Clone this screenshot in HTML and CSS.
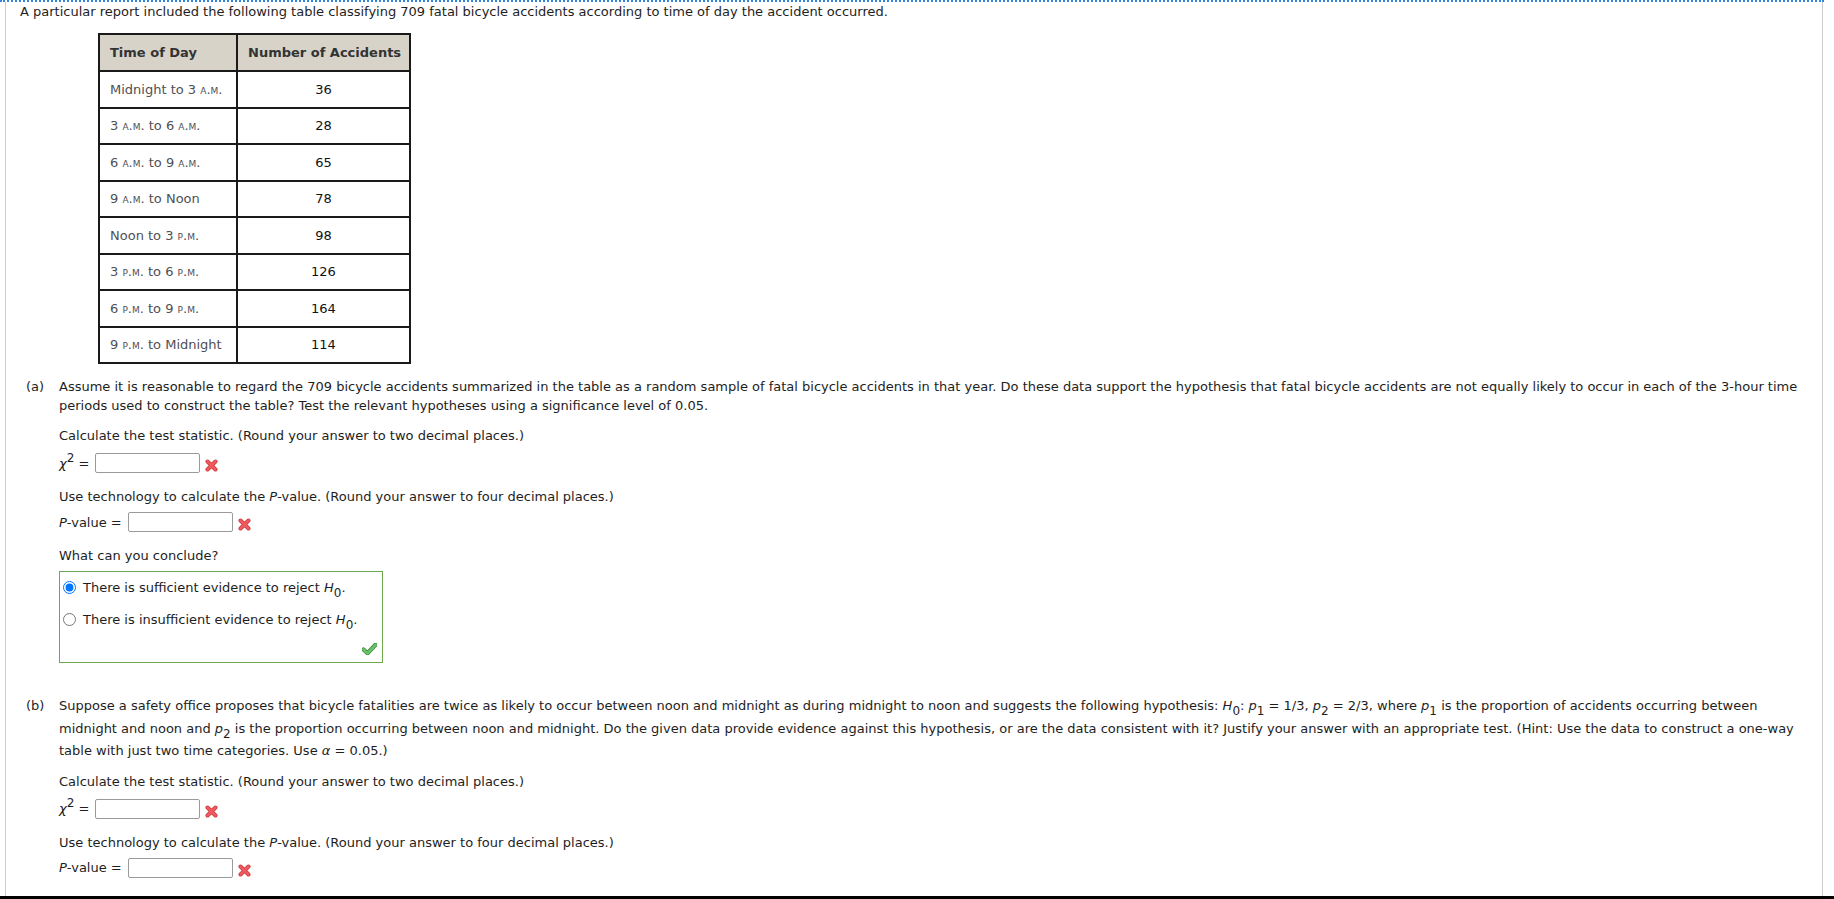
FILE: index.html
```html
<!DOCTYPE html>
<html>
<head>
<meta charset="utf-8">
<title>Bicycle accidents</title>
<link rel="stylesheet" href="styles.css">
</head>
<body>
<div class="frame">
  <div class="panel">
    <p class="intro">A particular report included the following table classifying 709 fatal bicycle accidents according to time of day the accident occurred.</p>

    <table class="data">
      <colgroup><col class="col1"><col class="col2"></colgroup>
      <thead>
        <tr><th>Time of Day</th><th class="c2">Number of Accidents</th></tr>
      </thead>
      <tbody>
        <tr><td class="lbl">Midnight to 3 <span class="sc">a.m.</span></td><td class="num">36</td></tr>
        <tr><td class="lbl">3 <span class="sc">a.m.</span> to 6 <span class="sc">a.m.</span></td><td class="num">28</td></tr>
        <tr><td class="lbl">6 <span class="sc">a.m.</span> to 9 <span class="sc">a.m.</span></td><td class="num">65</td></tr>
        <tr><td class="lbl">9 <span class="sc">a.m.</span> to Noon</td><td class="num">78</td></tr>
        <tr><td class="lbl">Noon to 3 <span class="sc">p.m.</span></td><td class="num">98</td></tr>
        <tr><td class="lbl">3 <span class="sc">p.m.</span> to 6 <span class="sc">p.m.</span></td><td class="num">126</td></tr>
        <tr><td class="lbl">6 <span class="sc">p.m.</span> to 9 <span class="sc">p.m.</span></td><td class="num">164</td></tr>
        <tr><td class="lbl">9 <span class="sc">p.m.</span> to Midnight</td><td class="num">114</td></tr>
      </tbody>
    </table>

    <div class="part part-a">
      <div class="plabel">(a)</div>
      <div class="pbody">
        <p class="q q-a">Assume it is reasonable to regard the 709 bicycle accidents summarized in the table as a random sample of fatal bicycle accidents in that year. Do these data support the hypothesis that fatal bicycle accidents are not equally likely to occur in each of the 3-hour time periods used to construct the table? Test the relevant hypotheses using a significance level of 0.05.</p>
        <p class="instr calc">Calculate the test statistic. (Round your answer to two decimal places.)</p>
        <div class="ans ans-chi">
          <span class="lab"><i class="chi">χ</i><sup>2</sup> =</span>
          <input class="box" type="text">
          <svg class="wrong" width="13" height="13" viewBox="0 0 13 13"><path d="M2.5 2.5 L10.5 10.5 M10.5 2.5 L2.5 10.5" stroke="#c9343a" stroke-width="4" stroke-linecap="round"/><path d="M2.5 2.5 L10.5 10.5 M10.5 2.5 L2.5 10.5" stroke="#ee5a5e" stroke-width="2.6" stroke-linecap="round"/></svg>
        </div>
        <p class="instr tech">Use technology to calculate the <i>P</i>-value. (Round your answer to four decimal places.)</p>
        <div class="ans ans-p">
          <span class="lab"><i>P</i>-value =</span>
          <input class="box" type="text">
          <svg class="wrong" width="13" height="13" viewBox="0 0 13 13"><path d="M2.5 2.5 L10.5 10.5 M10.5 2.5 L2.5 10.5" stroke="#c9343a" stroke-width="4" stroke-linecap="round"/><path d="M2.5 2.5 L10.5 10.5 M10.5 2.5 L2.5 10.5" stroke="#ee5a5e" stroke-width="2.6" stroke-linecap="round"/></svg>
        </div>
        <p class="instr what">What can you conclude?</p>
        <div class="choices">
          <label class="opt"><input type="radio" name="concl" checked><span>There is sufficient evidence to reject <i>H</i><sub>0</sub>.</span></label>
          <label class="opt"><input type="radio" name="concl"><span>There is insufficient evidence to reject <i>H</i><sub>0</sub>.</span></label>
          <div class="check-row">
            <svg class="right" width="15" height="12" viewBox="0 0 15 12"><path d="M1.5 6.5 L5.5 10.3 L13.5 1.8" fill="none" stroke="#3f8f3f" stroke-width="4.2" stroke-linecap="round" stroke-linejoin="round"/><path d="M1.5 6.5 L5.5 10.3 L13.5 1.8" fill="none" stroke="#6cc26c" stroke-width="2.6" stroke-linecap="round" stroke-linejoin="round"/></svg>
          </div>
        </div>
      </div>
    </div>

    <div class="part part-b">
      <div class="plabel">(b)</div>
      <div class="pbody">
        <p class="q q-b">Suppose a safety office proposes that bicycle fatalities are twice as likely to occur between noon and midnight as during midnight to noon and suggests the following hypothesis: <i>H</i><sub>0</sub>: <i>p</i><sub>1</sub> = 1/3, <i>p</i><sub>2</sub> = 2/3, where <i>p</i><sub>1</sub> is the proportion of accidents occurring between midnight and noon and <i>p</i><sub>2</sub> is the proportion occurring between noon and midnight. Do the given data provide evidence against this hypothesis, or are the data consistent with it? Justify your answer with an appropriate test. (Hint: Use the data to construct a one-way table with just two time categories. Use <i>α</i> = 0.05.)</p>
        <p class="instr calc calc-b">Calculate the test statistic. (Round your answer to two decimal places.)</p>
        <div class="ans ans-chi">
          <span class="lab"><i class="chi">χ</i><sup>2</sup> =</span>
          <input class="box" type="text">
          <svg class="wrong" width="13" height="13" viewBox="0 0 13 13"><path d="M2.5 2.5 L10.5 10.5 M10.5 2.5 L2.5 10.5" stroke="#c9343a" stroke-width="4" stroke-linecap="round"/><path d="M2.5 2.5 L10.5 10.5 M10.5 2.5 L2.5 10.5" stroke="#ee5a5e" stroke-width="2.6" stroke-linecap="round"/></svg>
        </div>
        <p class="instr tech">Use technology to calculate the <i>P</i>-value. (Round your answer to four decimal places.)</p>
        <div class="ans ans-p">
          <span class="lab"><i>P</i>-value =</span>
          <input class="box" type="text">
          <svg class="wrong" width="13" height="13" viewBox="0 0 13 13"><path d="M2.5 2.5 L10.5 10.5 M10.5 2.5 L2.5 10.5" stroke="#c9343a" stroke-width="4" stroke-linecap="round"/><path d="M2.5 2.5 L10.5 10.5 M10.5 2.5 L2.5 10.5" stroke="#ee5a5e" stroke-width="2.6" stroke-linecap="round"/></svg>
        </div>
        <p class="instr what">What can you conclude?</p>
      </div>
    </div>
  </div>
</div>
<div class="bottom-bar"></div>
</body>
</html>
```

FILE: styles.css
```css
html, body {
  margin: 0;
  padding: 0;
  height: 899px;
  overflow: hidden;
  background: #fff;
}

body {
  font-family: "DejaVu Sans", Verdana, sans-serif;
  font-size: 13px;
  color: #1e1e1e;
}

p { margin: 0; }

.frame {
  width: 1824px;
  border-top: 2px dotted #2f86df;
}

.panel {
  margin-left: 5px;
  width: 1818px;
  min-height: 1000px;
  box-sizing: border-box;
  border-left: 1px solid #cdcdcd;
  border-right: 1px solid #cdcdcd;
  padding: 0 6px 0 14px;
}

.intro {
  line-height: 19px;
}

/* table */
.data {
  margin: 12px 0 0 78px;
  border-collapse: collapse;
  table-layout: fixed;
  width: 311px;
}

.col1 { width: 138px; }
.col2 { width: 173px; }

.data th,
.data td {
  border: 2px solid #1a1a1a;
  padding: 0 10px;
  white-space: nowrap;
}

.data th {
  background: #d7d3c9;
  color: #333;
  font-weight: bold;
  text-align: left;
  height: 35px;
}

.data th.c2 { text-align: center; }

.data td { height: 34.5px; }

.data td.lbl { color: #4f4f55; }
.data td.num { text-align: center; color: #111; }

.sc { font-variant: small-caps; }

/* parts */
.part {
  display: flex;
  margin-left: 6px;
}

.plabel {
  width: 33px;
  flex: none;
}

.pbody {
  flex: 1;
  min-width: 0;
}

.part-a { margin-top: 13px; }
.part-a .plabel { line-height: 19px; }
.part-b { margin-top: 32px; }
.part-b .plabel { line-height: 22.5px; }

.q-a { line-height: 19px; }
.q-b { line-height: 22.5px; }

.instr { line-height: 19px; }
.calc { margin-top: 11px; }
.calc-b { margin-top: 9px; }
.tech { margin-top: 14px; }
.what { margin-top: 14px; }

sub {
  font-size: 12px;
  vertical-align: baseline;
  position: relative;
  top: 5px;
  line-height: 0;
}

sup {
  font-size: 12px;
  vertical-align: baseline;
  position: relative;
  top: -6px;
  line-height: 0;
}

i { font-style: italic; }

.ans {
  display: flex;
  align-items: center;
  height: 20px;
}

.ans-chi { margin-top: 8px; }
.ans-p { margin-top: 6px; }

.lab { white-space: nowrap; }

.box {
  width: 105px;
  height: 20px;
  box-sizing: border-box;
  border: 1px solid #9a9a9a;
  border-radius: 2px;
  padding: 0 3px;
  margin: 0 0 0 6px;
  font: inherit;
  background: #fff;
}

.wrong {
  margin: 5px 0 0 5px;
  flex: none;
}

/* choices */
.choices {
  margin-top: 6px;
  width: 324px;
  box-sizing: border-box;
  border: 1px solid #6fa84a;
  padding: 6px 0 7px;
}

.opt {
  display: flex;
  align-items: center;
  height: 19px;
  line-height: 19px;
}

.opt + .opt { margin-top: 13px; }

.opt input {
  margin: 0 7px 0 3px;
  width: 13px;
  height: 13px;
}

.check-row {
  display: flex;
  justify-content: flex-end;
  padding-right: 5px;
  margin-top: 14px;
}

.right { display: block; }

.bottom-bar {
  position: fixed;
  left: 0;
  right: 0;
  bottom: 0;
  height: 3px;
  background: #000;
}
```
